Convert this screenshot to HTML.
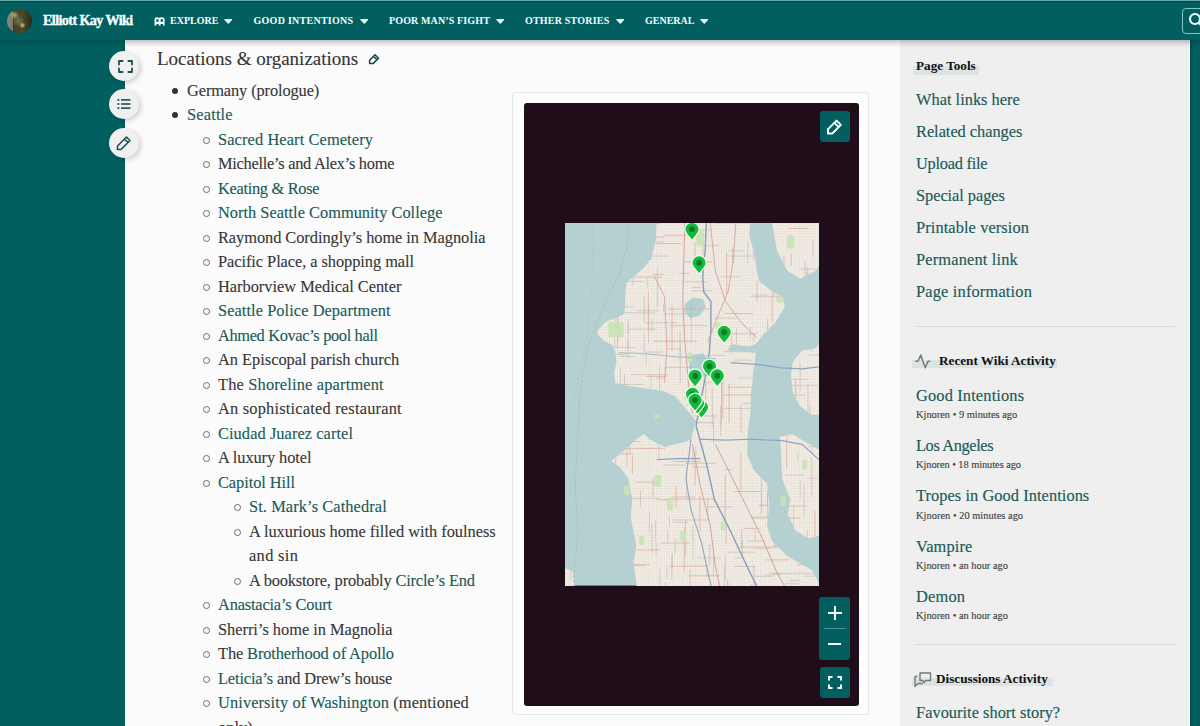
<!DOCTYPE html>
<html><head><meta charset="utf-8"><style>
*{box-sizing:border-box;margin:0;padding:0}
html,body{width:1200px;height:726px;overflow:hidden;background:#015f5f;font-family:"Liberation Serif",serif}
.abs{position:absolute}
#hdr{position:absolute;left:0;top:0;width:1200px;height:40px;background:linear-gradient(#034b4f 0,#034b4f 1px,#0a5f61 2.5px,#025f5f 4px);border-top:1px solid #64adb0;z-index:5;box-shadow:0 2px 6px rgba(0,0,0,0.22)}
#avatar{left:7px;top:7.5px;width:25px;height:24px;border-radius:50%;background:radial-gradient(circle at 30% 25%,rgba(220,220,160,0.7) 0,rgba(220,220,160,0) 18%),radial-gradient(circle at 62% 68%,rgba(230,230,190,0.8) 0,rgba(230,230,190,0) 14%),radial-gradient(circle at 45% 50%,rgba(150,150,90,0.6) 0,rgba(150,150,90,0) 35%),linear-gradient(90deg,#8a8a80 0,#7a7a6a 22%,#3f4020 25%,#4d4a2a 60%,#2b2a18 100%)}
#wname{left:43px;top:10.2px;font-size:14.2px;font-weight:700;color:#f4ffff;letter-spacing:-0.62px;line-height:18px;white-space:nowrap;-webkit-text-stroke:0.35px #f4ffff}
#search{left:1182px;top:6.5px;width:40px;height:26px;border:1.5px solid #7cc6c6;border-radius:4px}
.nav{position:absolute;top:11px;height:18px;line-height:18px;font-size:10px;font-weight:700;color:#f4ffff;white-space:nowrap}
.caret{position:absolute;top:19px;width:0;height:0;border-left:3.8px solid transparent;border-right:3.8px solid transparent;border-top:3.8px solid #f4ffff}
#content{position:absolute;left:125px;top:40px;width:775px;height:686px;background:#fbfbfb}
#side{position:absolute;left:900px;top:40px;width:290px;height:686px;background:#efefef;border-right:1.5px solid #f8fdfd}
#rstrip{position:absolute;left:1190px;top:40px;width:10px;height:686px;background:#015f5f;box-shadow:inset 2px 0 2px rgba(0,0,0,0.15)}
#shadow{position:absolute;left:125px;top:40px;width:1065px;height:7px;background:linear-gradient(rgba(0,0,0,0.06),rgba(0,0,0,0))}
.circ{position:absolute;left:109px;width:30px;height:30px;border-radius:50%;background:#f0f0f0;box-shadow:2px 2px 5px rgba(0,0,0,0.18)}
.t{position:absolute;white-space:nowrap;font-size:16.4px;line-height:24.5px;color:#363636;-webkit-text-stroke:0.1px #363636}
.a{color:#1a5a58;-webkit-text-stroke:0.12px #1a5a58}
.b1{position:absolute;width:6px;height:6px;border-radius:50%;background:#333}
.b2{position:absolute;width:7px;height:7px;border-radius:50%;border:1px solid #6a6a6a}
.sl{position:absolute;left:916px;white-space:nowrap;font-size:16.4px;line-height:20px;color:#1a5a58;-webkit-text-stroke:0.15px #1a5a58}
.meta{position:absolute;left:916px;white-space:nowrap;font-size:10.4px;line-height:14px;color:#444;-webkit-text-stroke:0.15px #444}
.sh{position:absolute;white-space:nowrap;font-size:13.2px;font-weight:700;line-height:16px;color:#111}
.mark{position:absolute;background:#dde3e3}
.hr{position:absolute;left:915px;width:260px;height:1px;background:#dadada}
#mframe{left:512px;top:92px;width:357px;height:623px;border:1px solid #e6e6e6;border-radius:3px;background:#fdfdfd}
#mdark{left:523.5px;top:103px;width:335px;height:603px;background:#1f0d1a;border-radius:3px}
.mbtn{background:#015f5f;border-radius:3px}

</style></head><body>
<div id="hdr">
<div class="abs" id="avatar"></div>
<div class="abs" id="wname">Elliott Kay Wiki</div>
<svg class="abs" style="left:153.5px;top:16px" width="11" height="9" viewBox="0 0 11 9"><path fill-rule="evenodd" d="M0.5 8.6 V2.6 Q0.5 0.2 2.8 0.2 Q4.3 0.2 5.05 1 Q5.8 0.2 7.3 0.2 Q10.6 0.2 10.6 2.6 V8.6 H9.1 V7.1 H6.6 V8.6 H4.6 V7.1 H2.4 V8.6 Z M2.4 2.2 H4.6 V4.8 H2.4 Z M6.6 2.2 H9.1 V4.8 H6.6 Z" fill="#f4ffff"/></svg>
<div class="nav" style="left:170px;letter-spacing:0px">EXPLORE</div>
<svg class="abs" style="left:223.5px;top:18.3px" width="8.5" height="5" viewBox="0 0 8.5 5"><path d="M0.6 0.6 H7.9 L4.25 4.6 Z" fill="#f4ffff" stroke="#f4ffff" stroke-width="0.9" stroke-linejoin="round"/></svg>
<div class="nav" style="left:253.5px;letter-spacing:0.27px">GOOD INTENTIONS</div>
<svg class="abs" style="left:359.5px;top:18.3px" width="8.5" height="5" viewBox="0 0 8.5 5"><path d="M0.6 0.6 H7.9 L4.25 4.6 Z" fill="#f4ffff" stroke="#f4ffff" stroke-width="0.9" stroke-linejoin="round"/></svg>
<div class="nav" style="left:389px;letter-spacing:0.13px">POOR MAN’S FIGHT</div>
<svg class="abs" style="left:495.5px;top:18.3px" width="8.5" height="5" viewBox="0 0 8.5 5"><path d="M0.6 0.6 H7.9 L4.25 4.6 Z" fill="#f4ffff" stroke="#f4ffff" stroke-width="0.9" stroke-linejoin="round"/></svg>
<div class="nav" style="left:525px;letter-spacing:0.2px">OTHER STORIES</div>
<svg class="abs" style="left:615.5px;top:18.3px" width="8.5" height="5" viewBox="0 0 8.5 5"><path d="M0.6 0.6 H7.9 L4.25 4.6 Z" fill="#f4ffff" stroke="#f4ffff" stroke-width="0.9" stroke-linejoin="round"/></svg>
<div class="nav" style="left:645px;letter-spacing:0px">GENERAL</div>
<svg class="abs" style="left:699.5px;top:18.3px" width="8.5" height="5" viewBox="0 0 8.5 5"><path d="M0.6 0.6 H7.9 L4.25 4.6 Z" fill="#f4ffff" stroke="#f4ffff" stroke-width="0.9" stroke-linejoin="round"/></svg>
<div class="abs" id="search"><svg class="abs" style="left:5px;top:3.2px" width="16" height="16" viewBox="0 0 16 16"><circle cx="7" cy="7" r="5" fill="none" stroke="#f4ffff" stroke-width="2.2"/><path d="M10.5 10.5 L15 15" stroke="#f4ffff" stroke-width="2.4"/></svg></div>
</div>
<div id="content"></div><div id="side"></div><div id="shadow"></div>
<div id="rstrip"></div>
<div class="circ" style="top:50.8px"><svg class="abs" style="left:8.5px;top:9px" width="15" height="13" viewBox="0 0 15 13"><path d="M1 4.6 V1 H4.6 M10.4 1 H14 V4.6 M14 8.4 V12 H10.4 M4.6 12 H1 V8.4" fill="none" stroke="#1f5050" stroke-width="1.8" stroke-linecap="round" stroke-linejoin="round"/></svg></div>
<div class="circ" style="top:89px"><svg class="abs" style="left:8px;top:8px" width="14" height="14" viewBox="0 0 14 14"><g fill="#1f5050"><rect x="0.5" y="2" width="1.8" height="1.8"/><rect x="0.5" y="6.1" width="1.8" height="1.8"/><rect x="0.5" y="10.2" width="1.8" height="1.8"/><rect x="4" y="2.1" width="9.5" height="1.6"/><rect x="4" y="6.2" width="9.5" height="1.6"/><rect x="4" y="10.3" width="9.5" height="1.6"/></g></svg></div>
<div class="circ" style="top:128px"><svg class="abs" style="left:7px;top:7px" width="16" height="16" viewBox="0 0 16 16"><path d="M1.5 14.5 V11 L10.5 2 L14 5.5 L5 14.5 Z M8.5 4 L12 7.5" fill="none" stroke="#1f5050" stroke-width="1.6" stroke-linejoin="round"/></svg></div>
<div class="t" style="left:157px;top:46.887499999999996px;font-size:19.0px;line-height:24px;color:#333">Locations &amp; organizations</div>
<svg class="abs" style="left:368px;top:53px" width="13" height="12" viewBox="0 0 13 12"><path d="M1.6 10.6 V7.2 L7 1.7 L10.5 5.2 L5 10.6 Z M5.5 3.2 L9 6.7" fill="none" stroke="#0f4a48" stroke-width="1.5" stroke-linejoin="round"/></svg>
<div class="b1" style="left:172px;top:87.80px"></div>
<div class="t" style="left:187px;top:78.62px;letter-spacing:-0.118px">Germany (prologue)</div>
<div class="b1" style="left:172px;top:112.30px"></div>
<div class="t" style="left:187px;top:103.12px;letter-spacing:0.167px"><span class="a">Seattle</span></div>
<div class="b2" style="left:203.2px;top:136.60px"></div>
<div class="t" style="left:218px;top:127.62px;letter-spacing:0.100px"><span class="a">Sacred Heart Cemetery</span></div>
<div class="b2" style="left:203.2px;top:161.10px"></div>
<div class="t" style="left:218px;top:152.12px;letter-spacing:-0.280px">Michelle’s and Alex’s home</div>
<div class="b2" style="left:203.2px;top:185.60px"></div>
<div class="t" style="left:218px;top:176.62px;letter-spacing:-0.308px"><span class="a">Keating &amp; Rose</span></div>
<div class="b2" style="left:203.2px;top:210.10px"></div>
<div class="t" style="left:218px;top:201.12px"><span class="a">North Seattle Community College</span></div>
<div class="b2" style="left:203.2px;top:234.60px"></div>
<div class="t" style="left:218px;top:225.62px;letter-spacing:-0.060px">Raymond Cordingly’s home in Magnolia</div>
<div class="b2" style="left:203.2px;top:259.10px"></div>
<div class="t" style="left:218px;top:250.11px;letter-spacing:-0.066px">Pacific Place, a shopping mall</div>
<div class="b2" style="left:203.2px;top:283.60px"></div>
<div class="t" style="left:218px;top:274.61px;letter-spacing:-0.021px">Harborview Medical Center</div>
<div class="b2" style="left:203.2px;top:308.10px"></div>
<div class="t" style="left:218px;top:299.11px;letter-spacing:0.058px"><span class="a">Seattle Police Department</span></div>
<div class="b2" style="left:203.2px;top:332.60px"></div>
<div class="t" style="left:218px;top:323.61px;letter-spacing:-0.359px"><span class="a">Ahmed Kovac’s pool hall</span></div>
<div class="b2" style="left:203.2px;top:357.10px"></div>
<div class="t" style="left:218px;top:348.11px;letter-spacing:-0.020px">An Episcopal parish church</div>
<div class="b2" style="left:203.2px;top:381.60px"></div>
<div class="t" style="left:218px;top:372.61px;letter-spacing:0.164px">The <span class="a">Shoreline apartment</span></div>
<div class="b2" style="left:203.2px;top:406.10px"></div>
<div class="t" style="left:218px;top:397.11px;letter-spacing:0.200px">An sophisticated restaurant</div>
<div class="b2" style="left:203.2px;top:430.60px"></div>
<div class="t" style="left:218px;top:421.61px;letter-spacing:0.063px"><span class="a">Ciudad Juarez cartel</span></div>
<div class="b2" style="left:203.2px;top:455.10px"></div>
<div class="t" style="left:218px;top:446.11px;letter-spacing:-0.092px">A luxury hotel</div>
<div class="b2" style="left:203.2px;top:479.60px"></div>
<div class="t" style="left:218px;top:470.61px;letter-spacing:-0.073px"><span class="a">Capitol Hill</span></div>
<div class="b2" style="left:234.2px;top:504.10px"></div>
<div class="t" style="left:249px;top:495.11px;letter-spacing:0.084px"><span class="a">St. Mark’s Cathedral</span></div>
<div class="b2" style="left:234.2px;top:528.60px"></div>
<div class="t" style="left:249px;top:519.62px;letter-spacing:-0.042px">A luxurious home filled with foulness</div>
<div class="t" style="left:249px;top:544.12px;letter-spacing:0.333px">and sin</div>
<div class="b2" style="left:234.2px;top:577.60px"></div>
<div class="t" style="left:249px;top:568.62px;letter-spacing:-0.173px">A bookstore, probably <span class="a">Circle’s End</span></div>
<div class="b2" style="left:203.2px;top:602.10px"></div>
<div class="t" style="left:218px;top:593.12px;letter-spacing:-0.188px"><span class="a">Anastacia’s Court</span></div>
<div class="b2" style="left:203.2px;top:626.60px"></div>
<div class="t" style="left:218px;top:617.62px;letter-spacing:-0.029px">Sherri’s home in Magnolia</div>
<div class="b2" style="left:203.2px;top:651.10px"></div>
<div class="t" style="left:218px;top:642.12px;letter-spacing:-0.121px">The <span class="a">Brotherhood of Apollo</span></div>
<div class="b2" style="left:203.2px;top:675.60px"></div>
<div class="t" style="left:218px;top:666.62px;letter-spacing:-0.148px"><span class="a">Leticia’s</span> and Drew’s house</div>
<div class="b2" style="left:203.2px;top:700.10px"></div>
<div class="t" style="left:218px;top:691.12px;letter-spacing:0.100px"><span class="a">University of Washington</span> (mentioned</div>
<div class="t" style="left:218px;top:715.62px">only)</div>
<div class="abs" id="mframe"></div>
<div class="abs" id="mdark"></div>
<svg class="abs" style="left:564.5px;top:223px" width="254.5" height="362.6" viewBox="0 0 254.5 362.6"><defs><pattern id="grid" width="2.6" height="2.6" patternUnits="userSpaceOnUse"><path d="M0 0.3 H2.6 M0.3 0 V2.6" stroke="#e2d3cb" stroke-width="0.5"/></pattern></defs><rect width="254.5" height="362.6" fill="#b4d0d1"/><polygon points="91.8,-0.5 185.1,-0.5 184.1,12.3 189.2,30.1 191.7,48.0 194.3,58.2 207.0,68.4 217.2,73.5 219.8,83.7 210.6,99.0 199.4,110.2 190.7,120.9 184.1,123.4 166.2,120.9 162.2,127.5 190.7,130.1 188.2,149.9 186.1,169.8 185.1,191.7 182.6,209.1 182.1,231.5 188.7,247.3 201.9,260.6 204.5,281.5 201.9,302.4 207.0,318.2 222.8,333.5 246.3,346.7 253.9,360.0 253.9,367.1 71.4,367.1 71.4,360.0 68.4,339.1 71.4,323.3 68.4,307.5 65.8,294.7 67.3,276.4 63.3,255.5 55.6,244.8 46.4,238.1 60.7,226.4 71.4,216.2 79.1,211.1 84.2,216.2 100.0,223.9 110.2,221.3 120.9,218.8 126.0,216.2 131.1,197.9 117.8,182.1 110.2,172.9 97.4,167.8 79.6,165.2 61.7,162.7 50.5,160.1 49.0,149.9 51.5,139.7 50.5,129.6 47.5,121.9 38.8,117.8 31.1,109.2 40.3,99.0 51.5,94.9 59.2,91.3 60.2,79.6 60.7,68.4 61.7,59.2 72.4,50.5 78.1,45.4 86.2,35.7 90.8,17.4" fill="#f1eee6"/><polygon points="207.0,-0.5 253.9,-0.5 253.9,42.9 250.4,48.0 235.1,55.6 222.3,48.0 212.1,27.6" fill="#f1eee6"/><polygon points="237.1,127.5 249.9,125.5 254.4,120.9 254.4,191.7 245.8,191.7 234.6,182.6 227.9,169.8 225.9,152.0 227.9,138.7" fill="#f1eee6"/><polygon points="214.7,213.7 227.9,211.6 239.2,218.3 254.4,226.9 253.9,312.6 243.2,315.6 230.5,307.5 222.8,291.7 225.4,276.4 217.2,255.5 216.2,229.0" fill="#f1eee6"/><polygon points="-2.5,343.7 7.7,348.8 10.2,367.1 -2.5,367.1" fill="#f1eee6"/><clipPath id="landclip"><polygon points="91.8,-0.5 185.1,-0.5 184.1,12.3 189.2,30.1 191.7,48.0 194.3,58.2 207.0,68.4 217.2,73.5 219.8,83.7 210.6,99.0 199.4,110.2 190.7,120.9 184.1,123.4 166.2,120.9 162.2,127.5 190.7,130.1 188.2,149.9 186.1,169.8 185.1,191.7 182.6,209.1 182.1,231.5 188.7,247.3 201.9,260.6 204.5,281.5 201.9,302.4 207.0,318.2 222.8,333.5 246.3,346.7 253.9,360.0 253.9,367.1 71.4,367.1 71.4,360.0 68.4,339.1 71.4,323.3 68.4,307.5 65.8,294.7 67.3,276.4 63.3,255.5 55.6,244.8 46.4,238.1 60.7,226.4 71.4,216.2 79.1,211.1 84.2,216.2 100.0,223.9 110.2,221.3 120.9,218.8 126.0,216.2 131.1,197.9 117.8,182.1 110.2,172.9 97.4,167.8 79.6,165.2 61.7,162.7 50.5,160.1 49.0,149.9 51.5,139.7 50.5,129.6 47.5,121.9 38.8,117.8 31.1,109.2 40.3,99.0 51.5,94.9 59.2,91.3 60.2,79.6 60.7,68.4 61.7,59.2 72.4,50.5 78.1,45.4 86.2,35.7 90.8,17.4"/><polygon points="207.0,-0.5 253.9,-0.5 253.9,42.9 250.4,48.0 235.1,55.6 222.3,48.0 212.1,27.6"/><polygon points="237.1,127.5 249.9,125.5 254.4,120.9 254.4,191.7 245.8,191.7 234.6,182.6 227.9,169.8 225.9,152.0 227.9,138.7"/><polygon points="214.7,213.7 227.9,211.6 239.2,218.3 254.4,226.9 253.9,312.6 243.2,315.6 230.5,307.5 222.8,291.7 225.4,276.4 217.2,255.5 216.2,229.0"/><polygon points="-2.5,343.7 7.7,348.8 10.2,367.1 -2.5,367.1"/></clipPath><rect width="254.5" height="362.6" fill="url(#grid)" clip-path="url(#landclip)" opacity="0.8"/><polygon points="119.9,81.1 127.5,74.5 137.7,76.0 140.8,83.7 135.1,92.8 125.0,94.9 119.3,88.8" fill="#b4d0d1"/><polygon points="125.0,132.1 137.7,130.6 145.3,139.7 142.8,152.5 131.1,155.0 123.9,144.8" fill="#b4d0d1"/><polyline points="63.8,0.1 61.2,27.6 53.6,53.1 38.3,83.7 23.0,124.5 15.3,165.2 12.8,211.1 10.2,262.1 12.8,313.1 7.7,367.1" fill="none" stroke="#97b3b8" stroke-width="0.6" stroke-dasharray="3 2"/><polyline points="28.1,0.1 27.1,58.2 20.4,124.5 7.7,180.5" fill="none" stroke="#a3bec2" stroke-width="0.5" stroke-dasharray="3 2"/><g clip-path="url(#landclip)"><path d="M82.3 54.6v10.3M136.1 132.4h24.2M9.5 157.0h10.9M107.8 299.3h15.1M159.4 343.1v20.7M248.0 16.9v17.3M36.6 42.6h34.1M45.9 210.5v19.9M139.1 22.7h14.6M172.8 154.8h26.7M115.1 108.5v30.4M62.0 207.9v36.0M185.3 104.2v11.8M106.2 274.1h23.6M10.0 241.9v26.3M222.4 113.6v27.0M147.3 165.1v38.2M120.4 240.4h30.4M164.4 359.5v17.1M98.0 242.1h22.8M42.7 42.4h32.6M32.9 89.6h35.9M20.5 162.6v36.3M208.1 312.8h21.3M91.1 320.1v12.8M44.8 84.0h23.5M149.6 95.1h21.4M93.8 205.0v30.1M130.9 223.6v9.7M228.5 282.3v33.5M99.7 144.4h28.3M15.8 24.4h13.2M86.4 19.0h12.8M25.8 131.6h36.0M156.0 53.8h19.1M92.5 44.5v39.8M118.4 175.1h11.3M87.0 95.8v13.2M5.9 344.3v12.7M138.0 9.8v39.3M219.3 252.0h19.7M42.4 279.4v32.9M83.7 80.7v39.5M216.6 291.8v31.7M57.6 187.4h8.9M7.1 101.1h30.2M243.0 161.9v39.6M242.6 132.0h15.3M50.0 74.0v36.8M213.5 173.6v33.6M21.5 239.1v33.0M190.5 173.0h33.3M84.5 289.9v20.7M102.0 342.7v13.4M32.3 54.7v33.8M37.1 299.2v29.0M89.0 198.6h8.5M246.6 235.2v37.9M110.2 315.6v14.8M64.0 106.1h26.8M65.9 151.7h37.1M89.9 165.9v36.9M106.8 332.2v25.0M133.0 6.8h13.9M1.0 289.3h23.2M184.2 201.4h24.6M141.1 283.9h25.9M63.1 100.2v24.2M142.7 275.1v22.2M155.6 183.0v30.2M114.9 193.0h38.1M177.6 317.3v16.3M142.1 341.5v12.4M30.9 160.0h15.7M18.6 242.3v36.7M39.2 259.2v12.6M224.2 350.3h38.5M101.2 176.4v34.6M41.0 156.2v18.9M49.7 115.3v8.6M140.7 159.4h18.6M158.5 185.4h39.5M200.2 351.8h16.5M10.1 282.0h12.1M107.3 329.9v16.3M37.9 332.7v30.4M22.7 20.8v21.6M18.4 339.7v33.7M21.3 310.0h35.6M115.3 122.8v37.7M68.0 46.8v15.6M27.8 58.4h14.5M79.2 110.4v17.3M127.0 64.4h8.6M63.6 5.6v25.6M48.1 171.9v11.4M208.0 156.4h34.7M99.8 183.4v39.4M87.0 301.3v28.4M102.8 125.8h12.2M18.0 268.2h13.2M21.5 304.5v29.5M71.6 87.7h22.7M40.0 161.4h38.8M247.0 198.0h38.9M78.6 129.1h20.2M120.6 182.0h24.2M1.3 95.6h20.8M10.6 8.1h15.4M148.7 191.6v29.0M181.9 318.2h18.4M250.1 54.1v28.6M11.1 302.4v28.1M186.4 294.0h24.8M128.1 302.2v34.4M148.4 323.2v30.2M58.4 11.3h19.5M26.6 302.6v28.1M159.1 246.4h8.1M202.6 270.9v25.1M167.5 23.9v16.1M18.9 96.1v14.6M187.9 353.2h20.2M121.7 247.5v27.7M163.3 28.0h16.1M188.8 110.2v8.4M15.4 97.3v30.1M171.6 105.3v22.9M118.5 42.9v14.4M248.4 338.9h22.7M208.3 350.5h16.6M53.3 342.3h26.6M36.0 189.7v12.2M208.3 184.2v30.5M58.8 325.0h8.8M0.9 178.0h17.7M35.7 124.5h34.9M0.4 271.8v11.8M235.3 258.1v17.3M94.5 142.2v26.9M91.6 155.0h9.5M25.8 302.2h37.9M63.3 96.2v14.1M94.8 346.1v34.0M160.2 330.7v25.6M182.8 17.9v22.4M191.2 233.3h9.6M235.4 46.1h19.0M75.6 267.5v16.3M166.6 108.9v20.6M42.5 58.5h37.0M126.3 79.6v39.9M114.3 50.5h10.9M86.9 33.0h16.3M144.7 321.2v21.2M105.1 189.7h18.8M15.8 100.5v12.0M127.9 227.9v14.9M68.8 89.9h22.3M242.3 307.2v8.7M8.2 256.8v23.1M149.1 0.1h37.7M209.7 309.7v16.0M27.7 55.9v29.8M239.1 261.3v32.5M116.2 199.6h33.0M59.1 333.0v17.7M32.5 91.1v30.4M28.5 25.5v26.7M98.6 80.9v8.3M76.6 166.8v28.6M224.5 172.1h15.9M244.0 255.1h8.7M126.6 244.2h16.2M169.5 334.9h9.1M85.9 152.2v14.3M202.5 267.6v14.6M246.3 112.8v15.4M56.2 275.3h38.5M125.9 67.8h21.3M169.0 343.5h20.6M54.1 352.6h9.7M15.3 142.4v36.3M186.1 361.1v18.5M47.1 338.8v9.0M168.8 137.1h18.6M43.0 1.0h19.2M242.7 44.8v14.6M90.6 297.4v21.8M12.5 171.4h37.4M49.0 131.9v9.0M104.3 293.9v9.3M8.9 22.7v16.2M189.8 325.3h16.7M243.3 223.3h30.9M80.4 99.8h32.2M232.8 229.5v8.8M59.4 172.0v38.5M98.2 90.9h23.8M235.7 66.2v31.6M209.0 279.8v18.5M81.2 131.0v10.5M50.1 272.5h10.1M8.6 200.0h39.4M224.4 357.6h10.7M24.5 180.4v22.3M59.5 150.9v29.6M190.0 306.6v11.9M213.6 106.3v19.9M187.5 72.1h15.9M38.9 320.1v18.4M100.6 359.3v15.4M205.3 236.5v11.3M120.6 296.5v37.3M10.3 106.3h14.1M247.1 211.1v19.9M220.0 162.6h32.9M240.2 38.3v27.8M55.3 133.5h14.5M64.7 217.0v14.5M2.9 118.5v13.9M79.3 73.6v25.5M16.1 36.7h25.6M162.4 33.0h30.3M104.1 102.6h38.5M79.3 205.1h21.3M219.5 360.8h14.3M184.9 73.7h36.9M107.6 297.0h36.3M117.1 58.8h25.6M162.7 329.3h27.9M94.2 182.6h17.1M132.4 335.0h23.7M204.4 350.0h12.1M239.5 353.1h9.7M235.2 140.4v27.9M209.4 58.0v15.1M102.7 306.4v13.9M55.4 144.7v20.3M31.3 89.4v36.7" stroke="#b9aea6" stroke-width="0.5" fill="none"/><path d="M10.4 203.6v11.5M212.9 42.6v32.0M159.3 110.8h33.3M108.1 238.5h27.5M5.9 224.0h19.4M193.9 282.4h17.2M120.2 38.8h27.2M23.3 160.0v11.6M161.7 29.8v41.1M129.9 19.6v25.1M241.5 49.3v49.8M185.9 295.0h49.3M124.9 346.3v16.6M200.2 336.9h24.0M192.1 57.5v21.0M207.2 52.0v46.8M52.9 95.2v22.8M9.4 65.9h47.5M172.6 324.1h41.4M29.2 192.1v24.4M221.7 201.0v45.3M26.6 359.4v25.8M202.6 95.8v33.1M91.5 276.8h17.1M188.9 17.5v20.1M162.4 356.2v36.5M79.4 0.6h16.0M156.5 156.5v45.8M33.5 82.3v10.9M0.7 128.5h24.3M57.0 211.3v18.2M158.5 171.9h47.5M61.9 54.1h35.5M221.3 283.1h20.6M2.9 233.5v24.0M164.0 160.6v39.3M63.1 327.1h31.3M103.1 86.0h41.2M3.1 199.4v15.7M50.7 220.1v35.7M206.6 63.2h22.0M12.3 321.9v38.6M1.6 305.7v28.6M188.4 163.8h14.2M59.0 14.1h40.0M176.6 306.0v20.6M140.7 157.9v30.9M67.4 232.4v18.7M223.5 5.5h19.4M188.9 342.0v23.1M223.6 118.9h46.3M160.2 250.8v49.2M119.3 304.0v44.3M111.1 262.3v22.3M53.8 225.4h46.4M36.7 9.7h47.2M87.6 51.3h11.7M175.9 229.5v39.5M16.7 213.8h42.7M208.2 322.6h44.7M232.3 341.8h18.2M28.4 12.5v42.5M161.1 298.7v21.5M25.4 35.4v18.2M81.1 153.4h20.3M71.8 259.1h22.8M244.9 182.4v34.7M7.9 149.5h40.9M88.1 255.1v18.7M219.0 32.9v16.8M0.3 73.1v49.1M1.1 177.7h41.9M46.9 179.0h43.3M66.2 341.7h18.6M177.7 180.4h35.5M20.5 285.2v41.5M159.5 128.7h25.8M226.2 31.2v11.0M52.4 95.3v30.0M96.3 320.0h28.4M135.0 273.1v35.9M88.5 118.3h43.7M168.2 268.6h27.6M196.5 209.7h28.5M224.8 86.1h22.1M178.6 305.4h16.2M62.9 118.2v16.4M83.3 68.5v39.1M25.9 348.4h25.4M249.9 287.7v27.4M49.8 230.9h18.3M98.6 12.3h41.6M176.1 181.2v28.5M36.0 218.5h39.6M230.6 155.7v40.0M107.0 82.7v45.2M196.6 253.4v37.2M163.0 164.3h35.1M24.9 151.9v38.5M159.9 90.5h28.2M157.9 148.2v47.2M46.5 236.9v25.5M124.4 352.8h31.7M40.9 283.0v30.8M25.7 208.0v38.7M130.1 231.4v30.9M104.2 343.2h37.4M99.7 276.1h49.4M90.3 20.5h26.0M3.4 151.5h37.9" stroke="#e0a899" stroke-width="0.7" fill="none"/></g><rect x="131.1" y="7.2" width="7.1" height="15.3" rx="2" fill="#c6e3b5" opacity="0.9"/><rect x="43.4" y="99.0" width="15.3" height="15.3" rx="2" fill="#c6e3b5" opacity="0.9"/><rect x="58.7" y="262.1" width="6.1" height="10.2" rx="2" fill="#c6e3b5" opacity="0.9"/><rect x="89.3" y="251.9" width="7.1" height="12.2" rx="2" fill="#c6e3b5" opacity="0.9"/><rect x="102.0" y="274.8" width="6.1" height="12.7" rx="2" fill="#c6e3b5" opacity="0.9"/><rect x="114.8" y="308.0" width="6.1" height="10.2" rx="2" fill="#c6e3b5" opacity="0.9"/><rect x="155.5" y="297.8" width="5.1" height="10.2" rx="2" fill="#c6e3b5" opacity="0.9"/><rect x="215.7" y="272.3" width="5.1" height="11.2" rx="2" fill="#c6e3b5" opacity="0.9"/><rect x="221.8" y="12.3" width="7.1" height="13.3" rx="2" fill="#c6e3b5" opacity="0.9"/><rect x="237.1" y="236.6" width="5.1" height="10.2" rx="2" fill="#c6e3b5" opacity="0.9"/><rect x="150.4" y="99.0" width="5.1" height="7.1" rx="2" fill="#c6e3b5" opacity="0.9"/><rect x="89.3" y="190.7" width="5.1" height="5.1" rx="2" fill="#c6e3b5" opacity="0.9"/><rect x="211.6" y="73.5" width="7.1" height="6.1" rx="2" fill="#c6e3b5" opacity="0.9"/><rect x="122.4" y="129.6" width="5.1" height="9.2" rx="2" fill="#c6e3b5" opacity="0.9"/><rect x="74.0" y="313.1" width="5.1" height="9.2" rx="2" fill="#c6e3b5" opacity="0.9"/><polyline points="141.3,0.1 140.2,27.6 137.7,52.6 138.7,68.9 145.9,78.6 145.9,107.1 144.3,129.6 140.2,155.0 134.1,185.6 131.1,203.0 141.8,242.2 149.4,276.4 165.2,307.5 183.6,346.7 193.8,367.1" fill="none" stroke="#8a9cb8" stroke-width="1.4"/><polyline points="126.0,216.2 120.9,255.5 126.0,286.6 136.7,320.7 146.9,366.6" fill="none" stroke="#93a5c0" stroke-width="1.1"/><polyline points="165.7,139.7 191.2,141.3 216.7,144.8 237.1,145.9 253.9,143.8" fill="none" stroke="#8fa4c4" stroke-width="1.2"/><polyline points="134.1,216.2 160.6,217.2 186.1,216.2 216.7,217.7 237.1,221.3 253.9,236.6" fill="none" stroke="#8fa4c4" stroke-width="1.2"/><polyline points="91.8,236.6 112.2,235.6 135.1,235.6" fill="none" stroke="#8fa4c4" stroke-width="1.2"/><polyline points="119.9,0.1 118.8,37.8 117.8,78.6 119.9,119.4 123.9,165.2 127.5,190.7" fill="none" stroke="#d9a0a0" stroke-width="1"/><polyline points="127.5,221.3 135.1,262.1 145.3,302.9 150.4,343.7 155.5,367.1" fill="none" stroke="#d9a0a0" stroke-width="1"/><polyline points="145.3,0.1 150.4,48.0 160.6,78.6 175.9,99.0 191.2,114.3" fill="none" stroke="#d9a0a0" stroke-width="0.9"/><polyline points="170.8,0.1 168.3,37.8 163.2,68.4 150.4,99.0 142.8,119.4" fill="none" stroke="#d9a0a0" stroke-width="0.9"/><polyline points="89.3,53.1 99.5,73.5 102.0,124.5 99.5,160.1" fill="none" stroke="#d9a0a0" stroke-width="0.9"/><polyline points="150.4,221.3 165.7,251.9 181.0,282.5 196.3,313.1 211.6,348.8 221.8,367.1" fill="none" stroke="#c99" stroke-width="0.9"/><polyline points="53.6,129.6 79.1,130.6 109.7,133.6 150.4,135.7" fill="none" stroke="#a9c4cc" stroke-width="1.4"/><g transform="translate(127.0,7.0)"><path d="M0 10.5 C-1.8 7.6 -7.2 3.2 -7.2 -0.6 A7.2 7.2 0 0 1 7.2 -0.6 C7.2 3.2 1.8 7.6 0 10.5 Z" fill="#15b93c" stroke="#e9ffe9" stroke-width="1.3"/><circle cx="0" cy="-0.8" r="2.9" fill="#0c7a2a"/></g><g transform="translate(134.1,40.5)"><path d="M0 10.5 C-1.8 7.6 -7.2 3.2 -7.2 -0.6 A7.2 7.2 0 0 1 7.2 -0.6 C7.2 3.2 1.8 7.6 0 10.5 Z" fill="#15b93c" stroke="#e9ffe9" stroke-width="1.3"/><circle cx="0" cy="-0.8" r="2.9" fill="#0c7a2a"/></g><g transform="translate(159.2,110.0)"><path d="M0 10.5 C-1.8 7.6 -7.2 3.2 -7.2 -0.6 A7.2 7.2 0 0 1 7.2 -0.6 C7.2 3.2 1.8 7.6 0 10.5 Z" fill="#15b93c" stroke="#e9ffe9" stroke-width="1.3"/><circle cx="0" cy="-0.8" r="2.9" fill="#0c7a2a"/></g><g transform="translate(144.5,144.0)"><path d="M0 10.5 C-1.8 7.6 -7.2 3.2 -7.2 -0.6 A7.2 7.2 0 0 1 7.2 -0.6 C7.2 3.2 1.8 7.6 0 10.5 Z" fill="#15b93c" stroke="#e9ffe9" stroke-width="1.3"/><circle cx="0" cy="-0.8" r="2.9" fill="#0c7a2a"/></g><g transform="translate(152.3,153.5)"><path d="M0 10.5 C-1.8 7.6 -7.2 3.2 -7.2 -0.6 A7.2 7.2 0 0 1 7.2 -0.6 C7.2 3.2 1.8 7.6 0 10.5 Z" fill="#15b93c" stroke="#e9ffe9" stroke-width="1.3"/><circle cx="0" cy="-0.8" r="2.9" fill="#0c7a2a"/></g><g transform="translate(130.1,153.8)"><path d="M0 10.5 C-1.8 7.6 -7.2 3.2 -7.2 -0.6 A7.2 7.2 0 0 1 7.2 -0.6 C7.2 3.2 1.8 7.6 0 10.5 Z" fill="#15b93c" stroke="#e9ffe9" stroke-width="1.3"/><circle cx="0" cy="-0.8" r="2.9" fill="#0c7a2a"/></g><g transform="translate(136.5,185.0)"><path d="M0 10.5 C-1.8 7.6 -7.2 3.2 -7.2 -0.6 A7.2 7.2 0 0 1 7.2 -0.6 C7.2 3.2 1.8 7.6 0 10.5 Z" fill="#15b93c" stroke="#e9ffe9" stroke-width="1.3"/><circle cx="0" cy="-0.8" r="2.9" fill="#0c7a2a"/></g><g transform="translate(132.5,181.0)"><path d="M0 10.5 C-1.8 7.6 -7.2 3.2 -7.2 -0.6 A7.2 7.2 0 0 1 7.2 -0.6 C7.2 3.2 1.8 7.6 0 10.5 Z" fill="#15b93c" stroke="#e9ffe9" stroke-width="1.3"/><circle cx="0" cy="-0.8" r="2.9" fill="#0c7a2a"/></g><g transform="translate(127.5,172.0)"><path d="M0 10.5 C-1.8 7.6 -7.2 3.2 -7.2 -0.6 A7.2 7.2 0 0 1 7.2 -0.6 C7.2 3.2 1.8 7.6 0 10.5 Z" fill="#15b93c" stroke="#e9ffe9" stroke-width="1.3"/><circle cx="0" cy="-0.8" r="2.9" fill="#0c7a2a"/></g><g transform="translate(130.1,178.0)"><path d="M0 10.5 C-1.8 7.6 -7.2 3.2 -7.2 -0.6 A7.2 7.2 0 0 1 7.2 -0.6 C7.2 3.2 1.8 7.6 0 10.5 Z" fill="#15b93c" stroke="#e9ffe9" stroke-width="1.3"/><circle cx="0" cy="-0.8" r="2.9" fill="#0c7a2a"/></g></svg>
<div class="abs mbtn" style="left:820px;top:111px;width:30px;height:31px"><svg class="abs" style="left:6px;top:7px" width="18" height="17" viewBox="0 0 18 17"><path d="M2 15.5 V11.2 L10.6 2.6 L14.9 6.9 L6.3 15.5 Z M8.4 4.8 L12.7 9.1" fill="none" stroke="#fff" stroke-width="1.9" stroke-linejoin="round"/></svg></div>
<div class="abs mbtn" style="left:818.5px;top:597px;width:31.5px;height:62.5px"><div class="abs" style="left:9px;top:14.5px;width:14px;height:2px;background:#fff"></div><div class="abs" style="left:15px;top:8.5px;width:2px;height:14px;background:#fff"></div><div class="abs" style="left:5px;top:30.5px;width:22px;height:1px;background:#4f8f92"></div><div class="abs" style="left:9px;top:46px;width:13.5px;height:2.2px;background:#fff"></div></div>
<div class="abs mbtn" style="left:820px;top:667px;width:30px;height:31px"><svg class="abs" style="left:8px;top:9px" width="14" height="13" viewBox="0 0 14 13"><path d="M1 4.5 V1 H4.5 M9.5 1 H13 V4.5 M13 8.5 V12 H9.5 M4.5 12 H1 V8.5" fill="none" stroke="#fff" stroke-width="2"/></svg></div>
<div class="mark" style="left:913px;top:66px;width:66px;height:9px"></div>
<div class="sh" style="left:916px;top:57.55px">Page Tools</div>
<div class="sl" style="top:89.67px;letter-spacing:0.0px">What links here</div>
<div class="sl" style="top:121.77px;letter-spacing:-0.043px">Related changes</div>
<div class="sl" style="top:153.87px;letter-spacing:-0.27px">Upload file</div>
<div class="sl" style="top:185.97px;letter-spacing:-0.067px">Special pages</div>
<div class="sl" style="top:218.07px;letter-spacing:0.088px">Printable version</div>
<div class="sl" style="top:250.16px;letter-spacing:0.154px">Permanent link</div>
<div class="sl" style="top:282.26px;letter-spacing:0.167px">Page information</div>
<div class="hr" style="top:325.5px"></div>
<div class="mark" style="left:912px;top:359.7px;width:145px;height:8.8px"></div>
<svg class="abs" style="left:914px;top:353px" width="18" height="16" viewBox="0 0 18 16"><path d="M1.3 8.3 H4 L6.7 2 L11.3 14.7 L14 8.3 H16.3" fill="none" stroke="#7a7a7a" stroke-width="1.5" stroke-linejoin="round"/></svg>
<div class="sh" style="left:939px;top:353.25px">Recent Wiki Activity</div>
<div class="sl" style="top:385.66px;letter-spacing:0.143px">Good Intentions</div>
<div class="meta" style="top:407.99px;letter-spacing:0.0px">Kjnoren • 9 minutes ago</div>
<div class="sl" style="top:435.96px;letter-spacing:-0.39px">Los Angeles</div>
<div class="meta" style="top:458.29px;letter-spacing:-0.057px">Kjnoren • 18 minutes ago</div>
<div class="sl" style="top:486.26px;letter-spacing:0.054px">Tropes in Good Intentions</div>
<div class="meta" style="top:508.59px;letter-spacing:0.03px">Kjnoren • 20 minutes ago</div>
<div class="sl" style="top:536.56px;letter-spacing:0.133px">Vampire</div>
<div class="meta" style="top:558.89px;letter-spacing:0.0px">Kjnoren • an hour ago</div>
<div class="sl" style="top:586.87px;letter-spacing:0.175px">Demon</div>
<div class="meta" style="top:609.19px;letter-spacing:0.0px">Kjnoren • an hour ago</div>
<div class="hr" style="top:644px"></div>
<div class="mark" style="left:912px;top:677.5px;width:141px;height:8.8px"></div>
<svg class="abs" style="left:914px;top:671px" width="18" height="17" viewBox="0 0 18 17"><path d="M6 9.5 V2 H16.5 V9.5 H12 L10 11.5 L9 9.5 Z M3.5 5.5 H1 V15.5 L4 12.5 H9" fill="none" stroke="#777" stroke-width="1.4" stroke-linejoin="round"/></svg>
<div class="sh" style="left:936px;top:671.04px">Discussions Activity</div>
<div class="sl" style="top:703.47px;letter-spacing:0.014px">Favourite short story?</div>
</body></html>
